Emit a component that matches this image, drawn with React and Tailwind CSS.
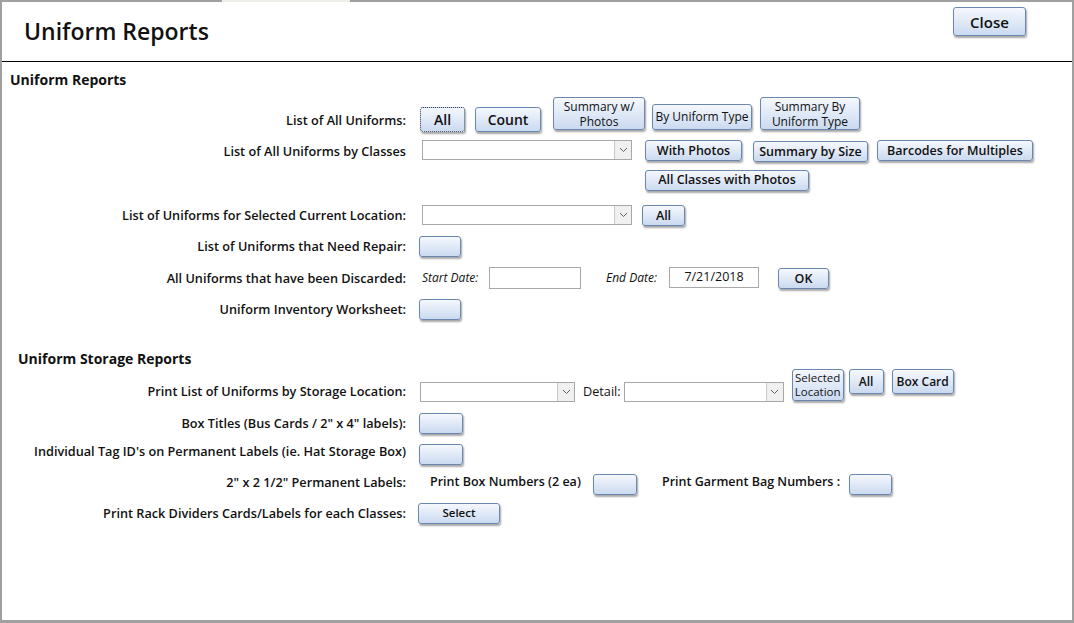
import React from "react";

const font = { fontFamily: '"Open Sans", "Noto Sans", sans-serif' };

const Btn = ({ children, className = "" }) => (
	<button
		className={`shrink-0 flex items-center justify-center rounded-[3px] border border-[#6a87b0] bg-gradient-to-b from-[#f5f8fd] to-[#cbdaf0] shadow-[1px_2px_2px_rgba(0,0,0,0.35)] text-[#111] leading-[14px] text-center ${className}`}
	>
		{children}
	</button>
);

const Select = ({ className = "" }) => (
	<div className={`shrink-0 flex h-[20px] border border-[#a8a8a8] bg-white ${className}`}>
		<div className="flex-1" />
		<div className="w-[17px] h-full border-l border-[#c8c8c8] bg-[#f0f0f0] flex items-center justify-center">
			<svg width="9" height="6" viewBox="0 0 9 6" fill="none" stroke="#606060" strokeWidth="1">
				<path d="M1 1l3.5 3.5L8 1" />
			</svg>
		</div>
	</div>
);

const Label = ({ children, className = "" }) => (
	<div className={`w-[404px] shrink-0 text-right text-[12.7px] font-semibold text-[#111] leading-[17px] ${className}`}>
		{children}
	</div>
);

const Row = ({ children, className = "" }) => (
	<div className={`flex items-center ${className}`}>{children}</div>
);

export default function App() {
	return (
		<div style={font} className="w-[1074px] h-[623px] bg-white flex flex-col overflow-hidden">
			<div className="flex h-[2px] shrink-0">
				<div className="w-[222px] bg-[#a0a0a0]" />
				<div className="w-[128px] bg-[#eeeee8]" />
				<div className="flex-1 bg-[#a0a0a0]" />
			</div>
			<div className="flex-1 flex flex-col border-x-2 border-b-[3px] border-[#a0a0a0]">
				{/* header */}
				<div className="h-[60px] shrink-0 flex items-start justify-between border-b border-black">
					<h1 className="ml-[22px] mt-[13px] text-[23px] leading-[32px] font-semibold text-[#111]">
						Uniform Reports
					</h1>
					<Btn className="mt-[5px] mr-[46px] w-[73px] h-[29px] text-[15px] font-semibold">Close</Btn>
				</div>

				<div className="ml-[8px] mt-[8px] h-[20px] text-[14px] font-bold leading-[20px] text-[#111]">
					Uniform Reports
				</div>

				{/* List of All Uniforms */}
				<div className="flex items-start mt-[7px] h-[36px]">
					<Label className="mt-[15px]">List of All Uniforms:</Label>
					<Btn className="ml-[14px] mt-[10px] w-[45px] h-[25px] text-[14px] font-semibold !border-dotted !border-[#2b3d58]">All</Btn>
					<Btn className="ml-[10px] mt-[10px] w-[66px] h-[25px] text-[14px] font-semibold">Count</Btn>
					<Btn className="ml-[12px] w-[92px] h-[33px] text-[12px] font-medium !leading-[15px]">Summary w/<br />Photos</Btn>
					<Btn className="ml-[7px] mt-[7px] w-[100px] h-[26px] text-[12px] font-medium">By Uniform Type</Btn>
					<Btn className="ml-[8px] w-[100px] h-[33px] text-[12px] font-medium !leading-[15px]">Summary By<br />Uniform Type</Btn>
				</div>

				{/* by classes */}
				<Row className="mt-[7px] h-[22px]">
					<Label>List of All Uniforms by Classes</Label>
					<Select className="ml-[16px] w-[210px] self-start" />
					<Btn className="ml-[13px] w-[97px] h-[21px] self-start text-[12.5px] font-semibold">With Photos</Btn>
					<Btn className="ml-[11px] w-[115px] h-[21px] self-end text-[12.5px] font-semibold">Summary by Size</Btn>
					<Btn className="ml-[9px] w-[156px] h-[21px] self-start text-[12.5px] font-semibold">Barcodes for Multiples</Btn>
				</Row>
				<Row className="mt-[7px] h-[22px]">
					<div className="w-[404px] shrink-0" />
					<Btn className="ml-[239px] w-[164px] h-[21px] text-[12.5px] font-semibold">All Classes with Photos</Btn>
				</Row>

				{/* current location */}
				<Row className="mt-[14px] h-[21px]">
					<Label>List of Uniforms for Selected Current Location:</Label>
					<Select className="ml-[16px] w-[210px] self-start" />
					<Btn className="ml-[10px] w-[43px] h-[21px] text-[12.5px] font-semibold">All</Btn>
				</Row>

				<Row className="mt-[9px] h-[22px]">
					<Label>List of Uniforms that Need Repair:</Label>
					<Btn className="ml-[13px] w-[42px] h-[21px]" />
				</Row>

				<Row className="mt-[10px] h-[22px]">
					<Label>All Uniforms that have been Discarded:</Label>
					<span className="ml-[16px] w-[67px] text-[12px] italic text-[#111]">Start Date:</span>
					<div className="w-[92px] h-[22px] border border-[#a8a8a8]" />
					<span className="ml-[25px] w-[63px] text-[12px] italic text-[#111]">End Date:</span>
					<div className="w-[90px] h-[21px] self-start border border-[#a8a8a8] text-[12.5px] text-[#111] text-center leading-[18px]">
						7/21/2018
					</div>
					<Btn className="ml-[19px] w-[51px] h-[21px] self-end text-[12.5px] font-semibold">OK</Btn>
				</Row>

				<Row className="mt-[9px] h-[22px]">
					<Label>Uniform Inventory Worksheet:</Label>
					<Btn className="ml-[13px] w-[42px] h-[21px]" />
				</Row>

				<div className="ml-[16px] mt-[29px] h-[20px] text-[14px] font-bold leading-[20px] text-[#111]">
					Uniform Storage Reports
				</div>

				{/* storage location */}
				<div className="flex items-start h-[34px]">
					<Label className="mt-[14px]">Print List of Uniforms by Storage Location:</Label>
					<Select className="ml-[14px] mt-[13px] w-[155px]" />
					<span className="ml-[8px] mt-[14px] text-[12.7px] leading-[17px] text-[#111]">Detail:</span>
					<Select className="ml-[3px] mt-[13px] w-[160px]" />
					<Btn className="ml-[8px] w-[52px] h-[32px] text-[11.5px] font-medium !leading-[14px]">Selected<br />Location</Btn>
					<Btn className="ml-[5px] w-[35px] h-[25px] text-[12px] font-semibold">All</Btn>
					<Btn className="ml-[8px] w-[62px] h-[25px] text-[12px] font-semibold">Box Card</Btn>
				</div>

				<Row className="mt-[9px] h-[22px]">
					<Label>Box Titles (Bus Cards / 2" x 4" labels):</Label>
					<Btn className="ml-[13px] w-[44px] h-[21px]" />
				</Row>

				<Row className="mt-[9px] h-[22px]">
					<Label className="mb-[5px]">Individual Tag ID's on Permanent Labels (ie. Hat Storage Box)</Label>
					<Btn className="ml-[13px] w-[44px] h-[21px]" />
				</Row>

				<Row className="mt-[8px] h-[22px]">
					<Label className="mb-[3px]">2" x 2 1/2" Permanent Labels:</Label>
					<span className="ml-[24px] w-[163px] text-[12.5px] font-semibold text-[#111] mb-[3px]">Print Box Numbers (2 ea)</span>
					<Btn className="w-[44px] h-[21px]" />
					<span className="ml-[25px] w-[187px] text-[12.5px] font-semibold text-[#111] mb-[3px]">Print Garment Bag Numbers :</span>
					<Btn className="w-[43px] h-[21px]" />
				</Row>

				<Row className="mt-[7px] h-[22px]">
					<Label>Print Rack Dividers Cards/Labels for each Classes:</Label>
					<Btn className="ml-[12px] w-[82px] h-[21px] text-[11.5px] font-semibold">Select</Btn>
				</Row>
			</div>
		</div>
	);
}
